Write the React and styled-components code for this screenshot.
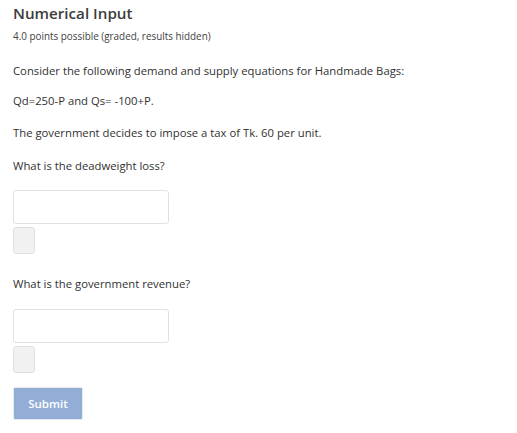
import React from "react";
import styled, { createGlobalStyle } from "styled-components";

const Global = createGlobalStyle`
  body {
    margin: 0;
    background: #fff;
    font-family: "Open Sans", "Noto Sans", sans-serif;
    color: #313131;
  }
`;

const Problem = styled.div`
  padding: 3px 13px 0;
`;

const Title = styled.h3`
  margin: 0;
  font-size: 15.2px;
  font-weight: 600;
  line-height: 20px;
  color: #3c3c3c;
`;

const Meta = styled.div`
  margin-top: 6px;
  font-size: 9.9px;
  line-height: 14px;
  color: #414141;
`;

const Para = styled.p`
  margin: ${(p) => p.top || 0}px 0 0;
  font-size: 11.3px;
  line-height: 16px;
`;

const NumberInput = styled.input`
  display: block;
  box-sizing: border-box;
  width: 156px;
  height: 34px;
  margin-top: ${(p) => p.top}px;
  border: 1px solid #e1e1e1;
  border-radius: 3px;
  background: #fff;
  outline: none;
`;

const Status = styled.span`
  display: block;
  box-sizing: border-box;
  width: 22px;
  height: 27px;
  margin-top: 3px;
  border: 1px solid #e0e0e0;
  border-radius: 3px;
  background: #f1f1f1;
`;

const SubmitButton = styled.button`
  display: block;
  width: 70px;
  height: 33px;
  margin-top: 14px;
  border: 1px solid #e6e9ef;
  border-radius: 2px;
  background: #93aed6;
  color: #fff;
  font-family: inherit;
  font-size: 11.5px;
  font-weight: 600;
`;

export default function App() {
  return (
    <>
      <Global />
      <Problem>
        <Title>Numerical Input</Title>
        <Meta>4.0 points possible (graded, results hidden)</Meta>
        <Para top={20}>Consider the following demand and supply equations for Handmade Bags:</Para>
        <Para top={14}>Qd=250-P and Qs= -100+P.</Para>
        <Para top={16}>The government decides to impose a tax of Tk. 60 per unit.</Para>
        <Para top={17}>What is the deadweight loss?</Para>
        <NumberInput type="text" top={16} />
        <Status />
        <Para top={22}>What is the government revenue?</Para>
        <NumberInput type="text" top={17} />
        <Status />
        <SubmitButton>Submit</SubmitButton>
      </Problem>
    </>
  );
}
